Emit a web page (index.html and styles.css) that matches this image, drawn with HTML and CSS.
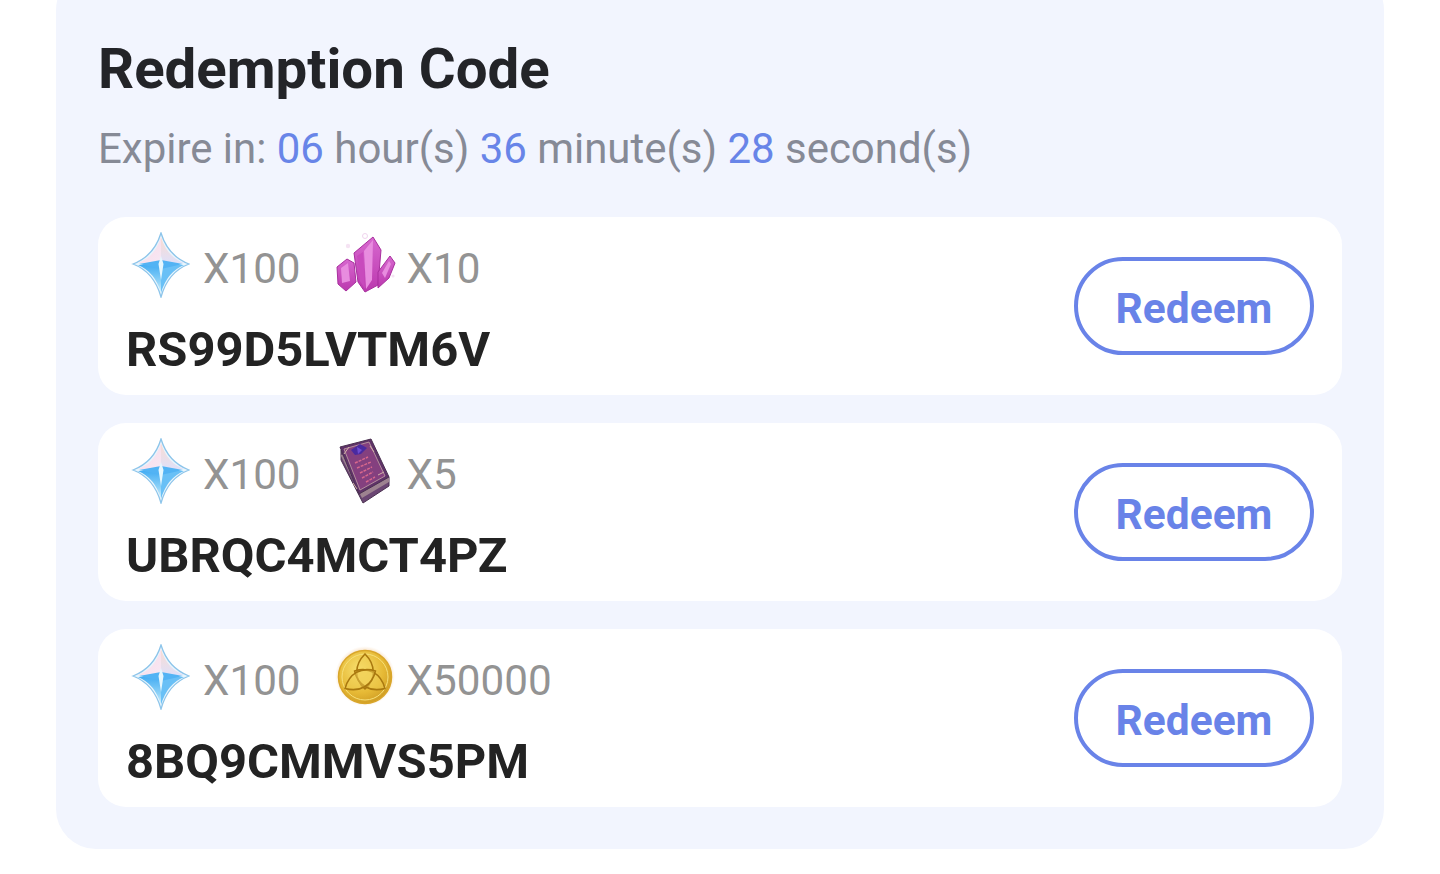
FILE: index.html
```html
<!DOCTYPE html>
<html lang="en">
<head>
<meta charset="utf-8">
<title>Redemption Code</title>
<link rel="stylesheet" href="styles.css">
</head>
<body>
<svg class="defs" width="0" height="0" aria-hidden="true">
  <defs>
    <linearGradient id="starPink" x1="0" y1="0" x2="1" y2="1">
      <stop offset="0" stop-color="#fcd9e6"/><stop offset="1" stop-color="#f6e8f4"/>
    </linearGradient>
    <linearGradient id="starPale" x1="0" y1="0" x2="0" y2="1">
      <stop offset="0" stop-color="#fbdcd2"/><stop offset="1" stop-color="#dfe0f8"/>
    </linearGradient>
    <linearGradient id="starBlue" x1="0" y1="0" x2="0" y2="1">
      <stop offset="0" stop-color="#45adf3"/><stop offset=".6" stop-color="#8fd3f8"/><stop offset="1" stop-color="#dff4fd"/>
    </linearGradient>
    <linearGradient id="crystal" x1="0" y1="0" x2="0" y2="1">
      <stop offset="0" stop-color="#d768cf"/><stop offset="1" stop-color="#bb38ae"/>
    </linearGradient>
    <radialGradient id="coin" cx=".4" cy=".35" r=".75">
      <stop offset="0" stop-color="#f8e070"/><stop offset=".6" stop-color="#e6b935"/><stop offset="1" stop-color="#c8941f"/>
    </radialGradient>
    <radialGradient id="glow" cx=".5" cy=".5" r=".5">
      <stop offset=".82" stop-color="#f2c590" stop-opacity=".7"/><stop offset="1" stop-color="#f8e2c8" stop-opacity="0"/>
    </radialGradient>
    <symbol id="star" viewBox="0 0 60 66">
      <path d="M31 1 Q38 24 59 32 Q38 40 31 65 Q24 40 3 32 Q24 24 31 1Z" fill="#e9f5fc" stroke="#8cc4ea" stroke-width="1.300"/>
      <path d="M31 5 Q37 25 54 31 L31 31Z" fill="url(#starPale)"/>
      <path d="M31 5 Q25 25 8 31 L31 31Z" fill="url(#starPink)"/>
      <path d="M8 33 Q25 40 31 61 L31 33Z" fill="url(#starBlue)"/>
      <path d="M54 33 Q37 40 31 61 L31 33Z" fill="#69c0f6"/>
      <path d="M9 32 L31 28 L53 32 L31 37Z" fill="#52b3f4"/>
      <path d="M31 24 L33.500 32 L31 48 L28.500 32Z" fill="#e6f7fe"/>
    </symbol>
  </defs>
</svg>
<main class="panel">
  <h1 class="title">Redemption Code</h1>
  <p class="expiry">Expire in: <span class="num">06</span> hour(s) <span class="num">36</span> minute(s) <span class="num">28</span> second(s)</p>
  <ul class="codes">
    <li class="code-row">
      <div class="code-info">
        <div class="rewards">
          <svg class="star"><use href="#star"/></svg>
          <span class="qty qty-first">X100</span>
          <svg class="item" viewBox="-1 0 62 66">
            <circle cx="30" cy="4" r="2.500" fill="none" stroke="#f0d4ee"/>
            <circle cx="13" cy="14" r="2.200" fill="#f5e3f3"/>
            <circle cx="58" cy="44" r="1.600" fill="#f5e3f3"/>
            <path d="M2 35 L12 27 L19 31 L21 50 L11 59 L3 52Z" fill="url(#crystal)" stroke="#a82f9e"/>
            <path d="M19 21 L38 5 L46 18 L43 53 L30 60 L23 50Z" fill="url(#crystal)" stroke="#a82f9e"/>
            <path d="M29 19 L38 8 L37 48 L31 57Z" fill="#e88cdf"/>
            <path d="M22 24 L28 20 L30 57 L25 49Z" fill="#c84abd"/>
            <path d="M43 40 L55 24 L60 31 L54 46 L43 56Z" fill="url(#crystal)" stroke="#a82f9e"/>
            <path d="M6 36 L13 31 L15 49 L7 51Z" fill="#e88cdf"/>
            <path d="M47 41 L54 29 L56 32 L50 46Z" fill="#e88cdf"/>
          </svg>
          <span class="qty">X10</span>
        </div>
        <div class="code">RS99D5LVTM6V</div>
      </div>
      <button class="redeem" type="button">Redeem</button>
    </li>
    <li class="code-row">
      <div class="code-info">
        <div class="rewards">
          <svg class="star"><use href="#star"/></svg>
          <span class="qty qty-first">X100</span>
          <svg class="item" viewBox="0 0 62 66">
            <path d="M7 22 L29 65 L55 48 L55 39 L7 12Z" fill="#6b4673" stroke="#4a3050"/>
            <path d="M6 16 L28 60 L55 44 L55 39Z" fill="#9d8290"/>
            <path d="M6 9 L37 1 L55 39 L25 56Z" fill="#5f3268" stroke="#4a3050"/>
            <path d="M10 11 L35 4 L51 38 L26 52Z" fill="#84407f" stroke="#bb9aa0" stroke-width=".9"/>
            <path d="M17 12 L26 6 L33 10 L27 16 L21 17Z" fill="#4a2aa0"/>
            <path d="M23 9 L28 12 L24 16Z" fill="#6f4cd0"/>
            <path d="M21 25 L34 19 M23 30 L37 24 M26 35 L38 29 M28 40 L39 34 M32 44 L41 39" stroke="#d8688c" stroke-width="1.500" fill="none" stroke-dasharray="3 1"/>
            <path d="M10 16 L15 9 M36 8 L40 14 M23 51 L19 45 M50 34 L44 37" stroke="#d2b2a8" stroke-width="1" fill="none"/>
          </svg>
          <span class="qty">X5</span>
        </div>
        <div class="code">UBRQC4MCT4PZ</div>
      </div>
      <button class="redeem" type="button">Redeem</button>
    </li>
    <li class="code-row">
      <div class="code-info">
        <div class="rewards">
          <svg class="star"><use href="#star"/></svg>
          <span class="qty qty-first">X100</span>
          <svg class="item" viewBox="0 0 62 66">
            <circle cx="31" cy="32" r="30" fill="url(#glow)"/>
            <circle cx="31" cy="33" r="26.500" fill="url(#coin)" stroke="#d9a62a" stroke-width="1.500"/>
            <circle cx="31" cy="33" r="23" fill="none" stroke="#f7e07a" stroke-width="1"/>
            <g fill="#f2d35a" fill-opacity=".45" stroke="#a9780f" stroke-width="1.600">
              <path d="M31 10 C42 21 42 35 31 45 C20 35 20 21 31 10Z"/>
              <path d="M31 10 C42 21 42 35 31 45 C20 35 20 21 31 10Z" transform="rotate(120 31 33)"/>
              <path d="M31 10 C42 21 42 35 31 45 C20 35 20 21 31 10Z" transform="rotate(240 31 33)"/>
            </g>
          </svg>
          <span class="qty">X50000</span>
        </div>
        <div class="code">8BQ9CMMVS5PM</div>
      </div>
      <button class="redeem" type="button">Redeem</button>
    </li>
  </ul>
</main>
</body>
</html>
```
FILE: styles.css
```css
html, body {
  margin: 0;
  padding: 0;
  background: #fff;
}
body {
  font-family: Roboto, "Noto Sans", sans-serif;
  height: 874px;
  overflow: hidden;
}
.defs {
  display: block;
  height: 0;
}
.panel {
  box-sizing: border-box;
  width: 1328px;
  height: 879px;
  margin: -30px 0 0 56px;
  padding: 64px 42px 42px;
  background: #f2f5fe;
  border-radius: 40px;
}
.title {
  margin: 0;
  font-size: 56.4px;
  line-height: 70px;
  font-weight: 700;
  color: #232428;
}
.expiry {
  margin: 17px 0 0;
  font-size: 41.95px;
  line-height: 56px;
  font-weight: 400;
  color: #868a96;
}
.num {
  color: #6885e8;
}
.codes {
  list-style: none;
  margin: 40px 0 0;
  padding: 0;
  display: flex;
  flex-direction: column;
  gap: 28px;
}
.code-row {
  box-sizing: border-box;
  height: 178px;
  padding: 0 28px;
  background: #fff;
  border-radius: 28px;
  display: flex;
  align-items: center;
  justify-content: space-between;
}
.code-info {
  box-sizing: border-box;
  align-self: stretch;
  padding-top: 15px;
  display: flex;
  flex-direction: column;
}
.rewards {
  display: flex;
  align-items: center;
  height: 66px;
}
.star {
  width: 60px;
  height: 66px;
  margin-left: 4px;
}
.item {
  width: 62px;
  height: 66px;
  margin-left: 33px;
}
.qty {
  font-size: 42.2px;
  line-height: 60px;
  padding-top: 8px;
  color: #939393;
  margin-left: 11px;
}
.qty-first {
  margin-left: 13px;
}
.code {
  margin-top: 22px;
  font-size: 48.9px;
  line-height: 60px;
  font-weight: 700;
  color: #232323;
}
.redeem {
  box-sizing: border-box;
  width: 240px;
  height: 98px;
  padding: 4px 0 0;
  background: #fff;
  border: 4px solid #6983e8;
  border-radius: 49px;
  font-family: Roboto, "Noto Sans", sans-serif;
  font-size: 42.5px;
  font-weight: 700;
  color: #6983e8;
}
```
